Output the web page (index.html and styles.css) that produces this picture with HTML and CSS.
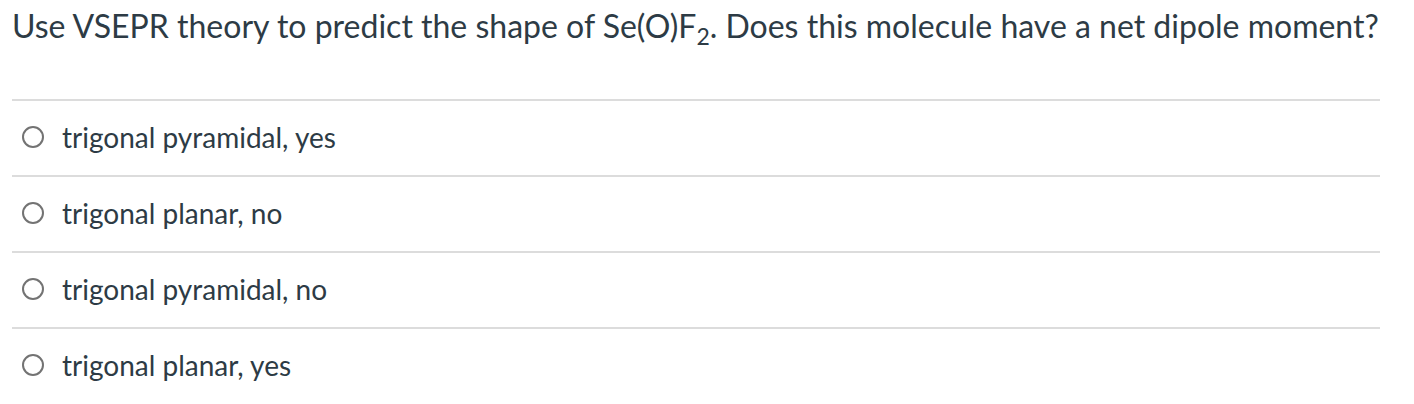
FILE: index.html
```html
<!DOCTYPE html>
<html>
<head>
<meta charset="utf-8">
<link rel="stylesheet" href="styles.css">
</head>
<body>
<div class="quiz">
  <div class="question">Use VSEPR theory to predict the shape of Se(O)F<sub>2</sub>. Does this molecule have a net dipole moment?</div>
  <div class="answers">
    <label class="answer"><span class="radio"></span><span class="text">trigonal pyramidal, yes</span></label>
    <label class="answer"><span class="radio"></span><span class="text">trigonal planar, no</span></label>
    <label class="answer"><span class="radio"></span><span class="text">trigonal pyramidal, no</span></label>
    <label class="answer"><span class="radio"></span><span class="text">trigonal planar, yes</span></label>
  </div>
</div>
</body>
</html>
```

FILE: styles.css
```css
html, body {
  margin: 0;
  padding: 0;
  background: #ffffff;
}
body {
  font-family: Lato, "Noto Sans", sans-serif;
  color: #2d3b45;
}
.quiz {
  margin-left: 12px;
  width: 1368px;
}
.question {
  font-size: 32px;
  line-height: 38px;
  padding-top: 7px;
  height: 99px;
  box-sizing: border-box;
  white-space: nowrap;
}
.question sub {
  font-size: 23px;
  line-height: 0;
  vertical-align: -7px;
}
.answers {
  display: flex;
  flex-direction: column;
}
.answer {
  display: flex;
  align-items: center;
  height: 71px;
  padding-bottom: 3px;
  border-top: 2px solid #dcdcdc;
  font-size: 28px;
}
.radio {
  width: 22px;
  height: 22px;
  box-sizing: border-box;
  border: 2px solid #737373;
  border-radius: 50%;
  margin-left: 10px;
  margin-right: 18px;
  flex: none;
}
```
